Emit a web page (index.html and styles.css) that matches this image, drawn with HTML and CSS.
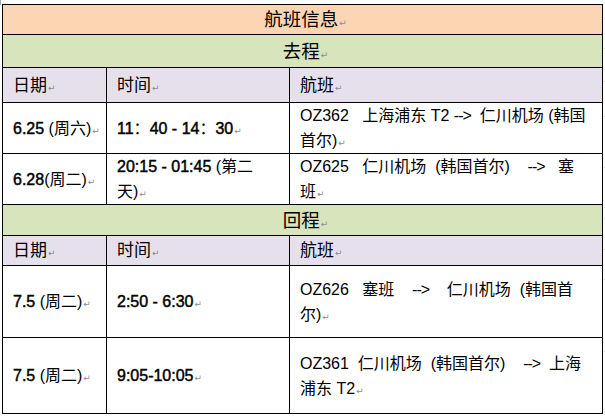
FILE: index.html
```html
<!DOCTYPE html>
<html lang="zh-CN">
<head>
<meta charset="utf-8">
<title>航班信息</title>
<link rel="stylesheet" href="styles.css">
</head>
<body>
<div class="corner"></div>
<table class="flights">
  <colgroup>
    <col class="c-date">
    <col class="c-time">
    <col class="c-flight">
  </colgroup>
  <tr class="r-title">
    <td colspan="3" class="title">航班信息<span class="pm">↵</span></td>
  </tr>
  <tr class="r-go">
    <td colspan="3" class="section">去程<span class="pm">↵</span></td>
  </tr>
  <tr class="r-head r-head1">
    <td>日期<span class="pm">↵</span></td>
    <td>时间<span class="pm">↵</span></td>
    <td>航班<span class="pm">↵</span></td>
  </tr>
  <tr class="r-d1">
    <td><b>6.25</b> (周六)<span class="pm">↵</span></td>
    <td><b>11</b>：<b>40 - 14</b>：<b>30</b><span class="pm">↵</span></td>
    <td>OZ362&nbsp;&nbsp; 上海浦东 T2 <span class="arr">--&gt;</span>&nbsp; 仁川机场 (韩国<br>首尔)<span class="pm">↵</span></td>
  </tr>
  <tr class="r-d2">
    <td><b>6.28</b>(周二)<span class="pm">↵</span></td>
    <td><b>20:15 - 01:45</b> (第二<br>天)<span class="pm">↵</span></td>
    <td>OZ625&nbsp;&nbsp; 仁川机场&nbsp; (韩国首尔)&nbsp;&nbsp;&nbsp; <span class="arr">--&gt;</span>&nbsp;&nbsp; 塞<br>班<span class="pm">↵</span></td>
  </tr>
  <tr class="r-back">
    <td colspan="3" class="section">回程<span class="pm">↵</span></td>
  </tr>
  <tr class="r-head r-head2">
    <td>日期<span class="pm">↵</span></td>
    <td>时间<span class="pm">↵</span></td>
    <td>航班<span class="pm">↵</span></td>
  </tr>
  <tr class="r-d3">
    <td><b>7.5</b> (周二)<span class="pm">↵</span></td>
    <td><b>2:50 - 6:30</b><span class="pm">↵</span></td>
    <td>OZ626&nbsp;&nbsp; 塞班&nbsp;&nbsp;&nbsp; <span class="arr">--&gt;</span>&nbsp;&nbsp;&nbsp; 仁川机场&nbsp; (韩国首<br>尔)<span class="pm">↵</span></td>
  </tr>
  <tr class="r-d4">
    <td><b>7.5</b> (周二)<span class="pm">↵</span></td>
    <td><b>9:05-10:05</b><span class="pm">↵</span></td>
    <td>OZ361&nbsp; 仁川机场&nbsp; (韩国首尔)&nbsp;&nbsp;&nbsp; <span class="arr">--&gt;</span>&nbsp; 上海<br>浦东 T2<span class="pm">↵</span></td>
  </tr>
</table>
</body>
</html>
```

FILE: styles.css
```css
html, body {
  margin: 0;
  padding: 0;
  background: #ffffff;
}

body {
  font-family: "Liberation Sans", Arial, "Noto Sans CJK SC", sans-serif;
  color: #000000;
}

.corner {
  position: absolute;
  left: 0;
  top: 0;
  width: 1px;
  height: 5px;
  background: #a6a6a6;
}

.flights {
  border-collapse: collapse;
  table-layout: fixed;
  width: 600px;
  margin: 4px 0 0 2px;
}

.c-date { width: 104px; }
.c-time { width: 183px; }
.c-flight { width: 313px; }

.flights td {
  border: 1px solid #000000;
  padding: 0 4px 0 10px;
  vertical-align: middle;
  font-size: 16px;
  line-height: 25px;
  white-space: nowrap;
  overflow: visible;
  position: relative;
}

.flights b {
  font-weight: normal;
  -webkit-text-stroke: 0.45px #000000;
}

.arr {
  letter-spacing: -1px;
}

.flights td:last-child::after {
  content: "↵";
  position: absolute;
  left: calc(100% + 2px);
  top: 8px;
  font-family: "DejaVu Sans", sans-serif;
  font-size: 9px;
  line-height: 10px;
  color: #8c8c8c;
}

.title {
  background: #fcd5b4;
  text-align: center;
  font-size: 18.5px !important;
}

.section {
  background: #d7e4bc;
  text-align: center;
  font-size: 18.5px !important;
}

.r-head td {
  background: #e5e0ec;
  font-size: 17px;
}

.pm {
  font-family: "DejaVu Sans", sans-serif;
  font-size: 9px;
  line-height: 10px;
  color: #8c8c8c;
  margin-left: 1px;
}

.r-title { height: 30px; }
.r-go { height: 33px; }
.r-head1 { height: 35px; }
.r-d1 { height: 51px; }
.r-d2 { height: 51px; }
.r-back { height: 31px; }
.r-head2 { height: 30px; }
.r-d3 { height: 72px; }
.r-d4 { height: 76px; }
```
